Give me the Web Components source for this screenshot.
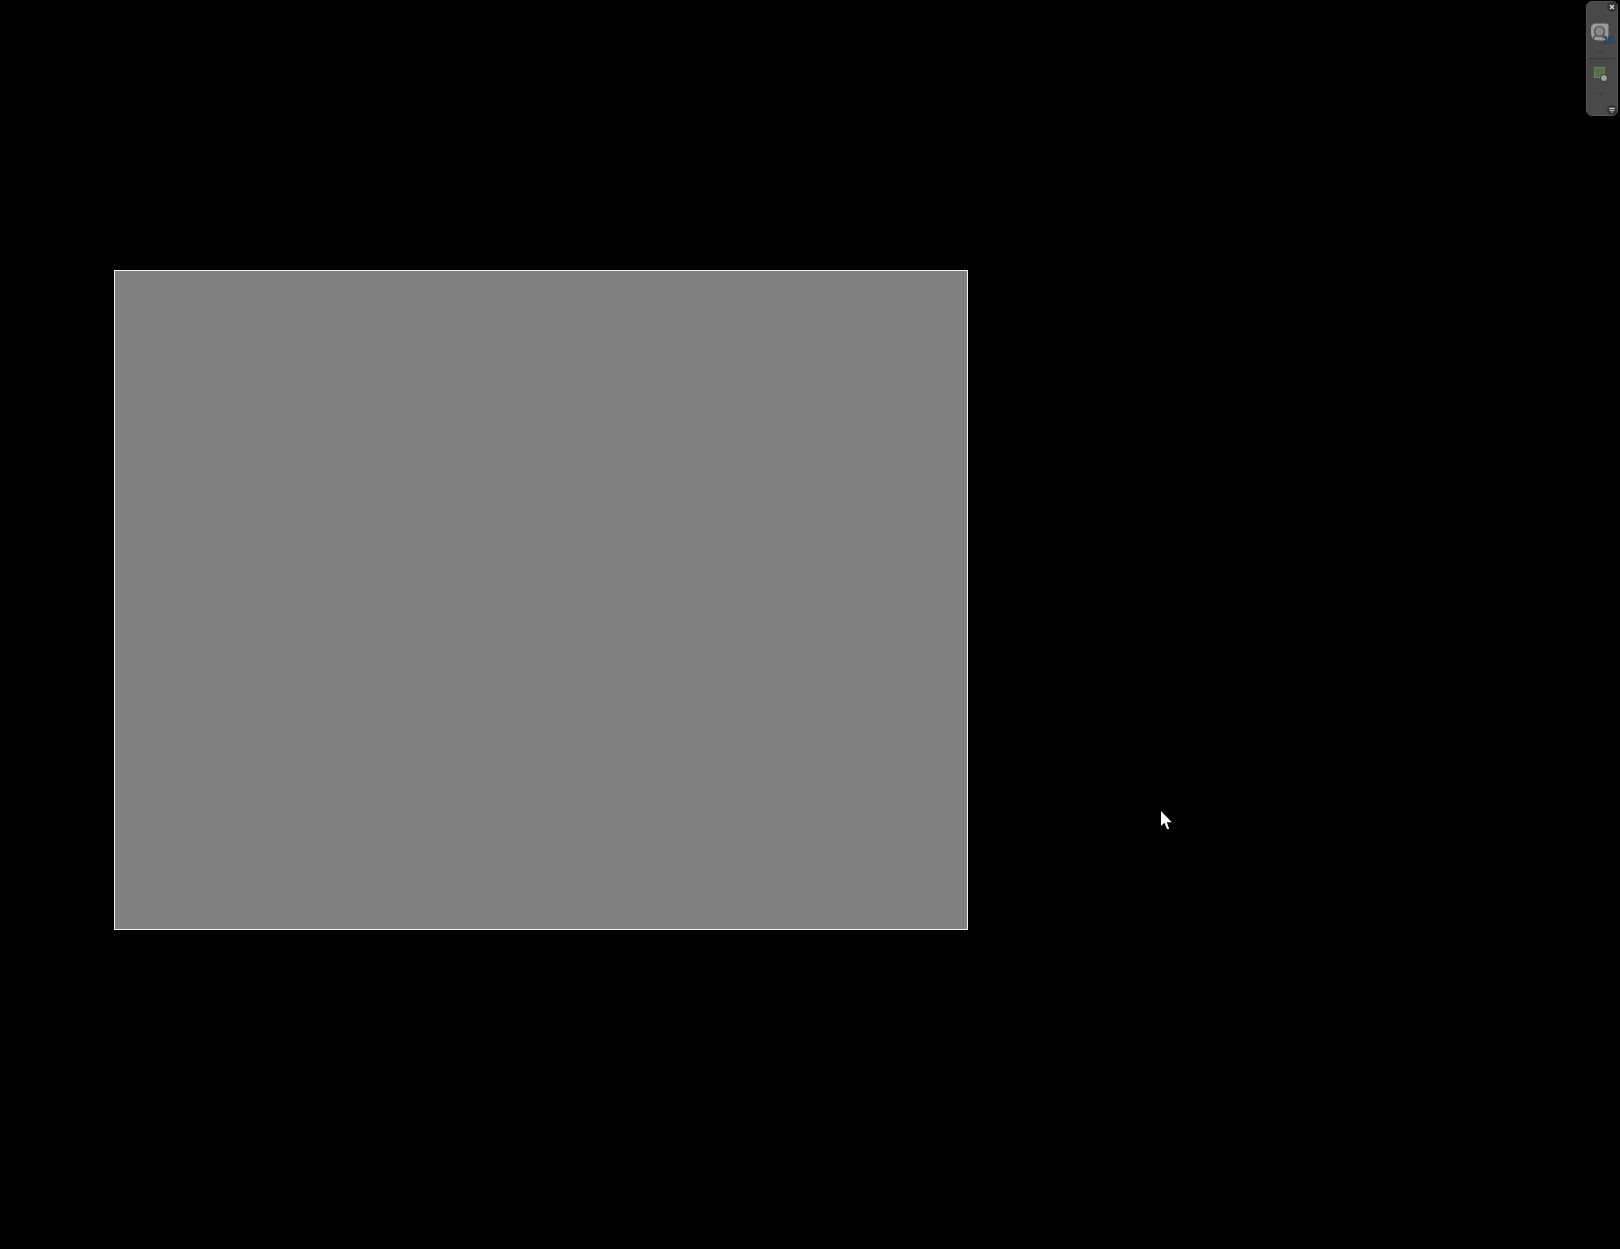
<!DOCTYPE html>
<html lang="en">
<head>
<meta charset="utf-8">
<title>Viewport</title>
<style>
html,body{margin:0;height:100%;background:#000;overflow:hidden}
</style>
</head>
<body>
<x-desktop>
  <x-viewport></x-viewport>
  <x-tool-panel slot="overlay">
    <x-tool kind="view"></x-tool>
    <x-tool kind="shape"></x-tool>
  </x-tool-panel>
  <x-cursor slot="overlay"></x-cursor>
</x-desktop>
<script>
function def(name, html, setup){
  customElements.define(name, class extends HTMLElement{
    constructor(){super();this.attachShadow({mode:'open'}).innerHTML=html;}
    connectedCallback(){ if(setup) setup(this); }
  });
}
def('x-desktop',`<style>
:host{display:block;position:relative;width:1620px;height:1249px;box-sizing:border-box;padding:270px 0 0 114px;background:#000}
</style><slot></slot><slot name="overlay"></slot>`);

def('x-viewport',`<style>
:host{display:block;width:854px;height:660px;box-sizing:border-box;background:#808080;border:1px solid #f2f2f2}
</style>`);

def('x-tool-panel',`<style>
:host{display:flex;flex-direction:column;position:absolute;top:1px;right:2px;width:32px;height:115px;box-sizing:border-box;
  background:#494949;border:1px solid #555;border-radius:6px;padding:0 0 1px;font-family:"Liberation Sans",sans-serif}
.top,.bottom{display:flex;justify-content:flex-end;height:10px;flex:none}
.bottom{margin-top:auto}
.round{width:10px;height:10px;border-radius:50%;background:#333;display:block}
.tools{display:flex;flex-direction:column;margin-top:2px}
</style>
<div class="top"><svg class="round" viewBox="0 0 10 10"><path d="M3 3L7 7M7 3L3 7" stroke="#d8d8d8" stroke-width="1.3"/></svg></div>
<div class="tools"><slot></slot></div>
<div class="bottom"><svg class="round" viewBox="0 0 10 10"><path d="M2.3 3.4H7.7M2.3 5.2H7.7M3.8 7H6.2" stroke="#c8c8c8" stroke-width="1.1"/></svg></div>`);

def('x-tool',`<style>
:host{display:flex;flex-direction:column;align-items:center;box-sizing:border-box;position:relative;margin:0 2px}
:host(:first-child){height:45px;border-bottom:1px solid #333}
:host(:last-child){height:46px}
.icon{position:relative;width:28px;height:32px;flex:none}
svg{display:block}
.chev{width:6px;height:3px;margin-top:auto;margin-bottom:4px;margin-right:2px;flex:none}
:host(:last-child) .chev{margin-bottom:9px}
</style>
<div class="icon" id="i"></div>
<svg class="chev" viewBox="0 0 6 3"><path d="M0 0H6L3 3Z" fill="#3c3c3c"/></svg>`, el=>{
  const i=el.shadowRoot.getElementById('i');
  if(i.firstChild) return;
  if(el.getAttribute('kind')==='view'){
    i.innerHTML=`<svg width="28" height="32" viewBox="0 0 28 32" style="position:absolute;left:0;top:0">
      <path d="M8 9.5H18Q20.5 9.5 20.5 12V22Q20.5 26.5 16 26.5H10Q3 26.5 3 19V14.5Q3 9.5 8 9.5Z" fill="#999"/>
      <circle cx="11.5" cy="17.5" r="5" fill="#888" stroke="#4a4a4a" stroke-width="1.2"/>
      <path d="M7.5 21.5L5 24.5M15.5 21.5L18 24.5" stroke="#4a4a4a" stroke-width="1.2"/>
    </svg><span style="position:absolute;left:14px;top:21px;font:bold 10px/11px 'Liberation Sans',sans-serif;color:#1c4475">2D</span>`;
  } else {
    i.innerHTML=`<svg width="28" height="32" viewBox="0 0 28 32" style="position:absolute;left:0;top:0">
      <rect x="6.5" y="8.5" width="10" height="10" fill="#54724a" stroke="#688060"/>
      <circle cx="16" cy="19" r="3.6" fill="#a0a0a0" stroke="#333"/>
      <circle cx="20" cy="22" r=".7" fill="#666"/>
    </svg>`;
  }
});

def('x-cursor',`<style>
:host{display:block;position:absolute;left:1161px;top:811px;width:12px;height:19px}
svg{display:block}
</style>
<svg width="12" height="19" viewBox="0 0 12 19"><path d="M0 0V15L3.4 11.8L6 18H8.2L5.8 11.2H10.8Z" fill="#fff"/></svg>`);
</script>
</body>
</html>
